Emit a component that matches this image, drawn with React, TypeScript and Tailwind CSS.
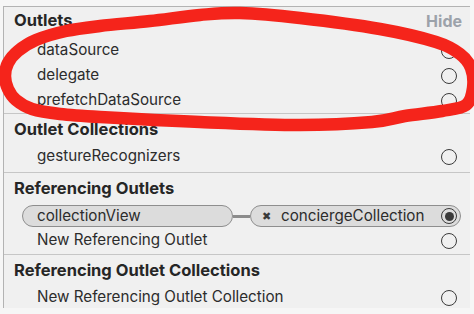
import React from "react"

// centreline of the red marker loop drawn over the screenshot
const loop: [number, number][] = [
  [240, 13], [200, 15], [150, 21], [100, 26], [66, 31], [36, 40], [18, 51], [8, 63],
  [5, 76], [8, 89], [16, 100], [32, 109], [60, 114], [100, 117], [200, 122], [300, 125],
  [372, 122], [405, 116], [442, 111], [466, 105], [473, 88], [471, 68], [460, 54],
  [436, 42], [380, 29], [300, 18],
]

function smoothPath(pts: [number, number][]) {
  const n = pts.length
  const at = (i: number) => pts[(i + n) % n]
  let d = `M ${pts[0][0]} ${pts[0][1]}`
  for (let i = 0; i < n; i++) {
    const p0 = at(i - 1), p1 = at(i), p2 = at(i + 1), p3 = at(i + 2)
    const c1 = [p1[0] + (p2[0] - p0[0]) / 6, p1[1] + (p2[1] - p0[1]) / 6]
    const c2 = [p2[0] - (p3[0] - p1[0]) / 6, p2[1] - (p3[1] - p1[1]) / 6]
    d += ` C ${c1[0]} ${c1[1]} ${c2[0]} ${c2[1]} ${p2[0]} ${p2[1]}`
  }
  return d + " Z"
}

function Radio({ filled = false }: { filled?: boolean }) {
  return (
    <span className="flex h-[16px] w-[16px] shrink-0 items-center justify-center rounded-full border-[1.3px] border-[#3b3b3b]">
      {filled && <span className="h-[9px] w-[9px] rounded-full bg-[#3a3a3a]" />}
    </span>
  )
}

function Header({ title, hide = false, className = "" }: { title: string; hide?: boolean; className?: string }) {
  return (
    <div className={`flex items-center justify-between pl-[10px] pr-[8px] ${className}`}>
      <span className="text-[16.5px] font-bold text-[#262626]">{title}</span>
      {hide && <span className="text-[16px] font-bold text-[#9ca2aa]">Hide</span>}
    </div>
  )
}

function Item({ label }: { label: string }) {
  return (
    <div className="flex h-[25px] items-center justify-between pl-[33px] pr-[13px]">
      <span className="text-[15.2px] text-[#2c2c2c]">{label}</span>
      <Radio />
    </div>
  )
}

export default function App() {
  return (
    <div
      className="relative h-[314px] w-[474px] overflow-hidden bg-[#f6f6f6]"
      style={{ fontFamily: "Inter, 'Noto Sans', sans-serif" }}
    >
      <div className="ml-[3px] mt-[6px] h-[302px] w-[467px] overflow-hidden border-l border-t border-[#b3b3b3] bg-[#f0f0f0]">
        <section className="border-b border-[#c6c6c6]">
          <Header title="Outlets" hide className="h-[27px]" />
          <div className="mt-[4px]">
            <Item label="dataSource" />
            <Item label="delegate" />
            <Item label="prefetchDataSource" />
          </div>
        </section>

        <section className="border-b border-[#c6c6c6] pb-[3px]">
          <Header title="Outlet Collections" className="h-[30px]" />
          <Item label="gestureRecognizers" />
        </section>

        <section className="border-b border-[#c6c6c6] pb-[1px]">
          <Header title="Referencing Outlets" className="h-[30px]" />
          <div className="mt-[1px] flex h-[24px] items-center">
            <div className="ml-[18px] flex h-[22px] w-[211px] items-center rounded-full border border-[#8e8e8e] bg-[#dcdcdc] pl-[14px]">
              <span className="text-[15.2px] text-[#2c2c2c]">collectionView</span>
            </div>
            <div className="h-[3px] w-[17px] bg-[#8c8c8c]" />
            <div className="flex h-[22px] w-[211px] items-center justify-between rounded-full border border-[#8e8e8e] bg-[#dcdcdc] pl-[11px] pr-[3px]">
              <span className="flex items-center gap-[10px] text-[15.2px] text-[#2c2c2c]">
                <span className="text-[11px] text-[#3a3a3a]">✖</span>
                conciergeCollection
              </span>
              <Radio filled />
            </div>
          </div>
          <Item label="New Referencing Outlet" />
        </section>

        <section>
          <Header title="Referencing Outlet Collections" className="h-[30px]" />
          <Item label="New Referencing Outlet Collection" />
        </section>
      </div>

      <svg className="pointer-events-none absolute inset-0" width="474" height="314" viewBox="0 0 474 314">
        <path
          d={smoothPath(loop)}
          fill="none"
          stroke="#f5241b"
          strokeWidth="12.5"
          strokeLinecap="round"
          strokeLinejoin="round"
        />
      </svg>
    </div>
  )
}
